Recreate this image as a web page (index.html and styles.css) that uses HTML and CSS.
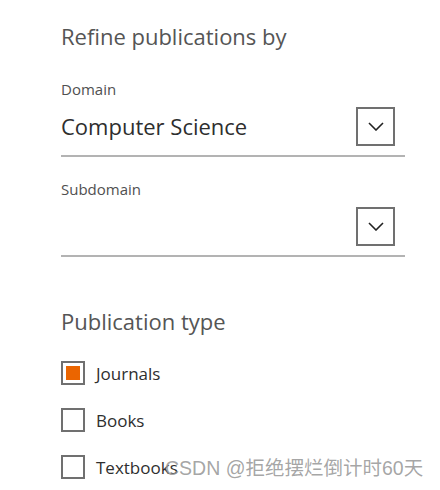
FILE: index.html
```html
<!DOCTYPE html>
<html lang="en">
<head>
<meta charset="utf-8">
<link rel="stylesheet" href="styles.css">
</head>
<body>
<div class="panel">
  <h2 class="title">Refine publications by</h2>
  <div class="field">
    <div class="field-label">Domain</div>
    <div class="select-row">
      <span class="select-value">Computer Science</span>
      <span class="select-btn"><svg width="16" height="9" viewBox="0 0 16 9"><path d="M1 1l7 7 7-7" fill="none" stroke="#222" stroke-width="1.6"/></svg></span>
    </div>
  </div>
  <div class="field field-sub">
    <div class="field-label">Subdomain</div>
    <div class="select-row">
      <span class="select-value"></span>
      <span class="select-btn"><svg width="16" height="9" viewBox="0 0 16 9"><path d="M1 1l7 7 7-7" fill="none" stroke="#222" stroke-width="1.6"/></svg></span>
    </div>
  </div>
  <h2 class="title title-type">Publication type</h2>
  <ul class="checks">
    <li class="check"><span class="box checked"><span class="fill"></span></span><span class="check-label">Journals</span></li>
    <li class="check"><span class="box"></span><span class="check-label">Books</span></li>
    <li class="check"><span class="box"></span><span class="check-label">Textbooks</span></li>
  </ul>
</div>
<div class="watermark">CSDN @拒绝摆烂倒计时60天</div>
</body>
</html>
```
FILE: styles.css
```css
html, body {
  margin: 0;
  padding: 0;
  background: #fff;
}
body {
  width: 440px;
  height: 490px;
  overflow: hidden;
  position: relative;
  font-family: "Open Sans", Lato, sans-serif;
  color: #505050;
}
.panel {
  padding: 21px 0 0 61px;
  width: 344px;
}
.title {
  margin: 0;
  font-weight: 400;
  font-size: 22px;
  line-height: 30px;
  color: #555;
}
.field {
  margin-top: 28px;
}
.field-label {
  font-size: 15px;
  line-height: 20px;
  color: #505050;
}
.select-row {
  display: flex;
  align-items: center;
  justify-content: space-between;
  padding: 0 10px 9px 0;
  border-bottom: 2px solid #b3b3b3;
  margin-top: 8px;
}
.select-value {
  font-size: 22px;
  line-height: 39px;
  color: #2e2e2e;
}
.select-btn {
  width: 35px;
  height: 35px;
  border: 2px solid #707070;
  display: flex;
  align-items: center;
  justify-content: center;
}
.select-btn svg {
  display: block;
}
.field-sub {
  margin-top: 22px;
}
.title-type {
  margin-top: 49px;
}
.checks {
  list-style: none;
  margin: 25px 0 0;
  padding: 0;
}
.check {
  display: flex;
  align-items: center;
  height: 24px;
  margin-bottom: 23px;
}
.box {
  width: 20px;
  height: 20px;
  border: 2px solid #707070;
  display: flex;
  align-items: center;
  justify-content: center;
  flex: none;
}
.fill {
  width: 14px;
  height: 14px;
  background: #eb6500;
}
.check-label {
  margin-left: 11px;
  font-size: 17px;
  color: #2e2e2e;
}
.watermark {
  position: absolute;
  left: 165px;
  top: 456px;
  font-family: "Liberation Sans", "Noto Sans CJK SC", sans-serif;
  font-size: 19.5px;
  line-height: 24px;
  color: rgba(150, 150, 150, 0.85);
  white-space: nowrap;
}
```
